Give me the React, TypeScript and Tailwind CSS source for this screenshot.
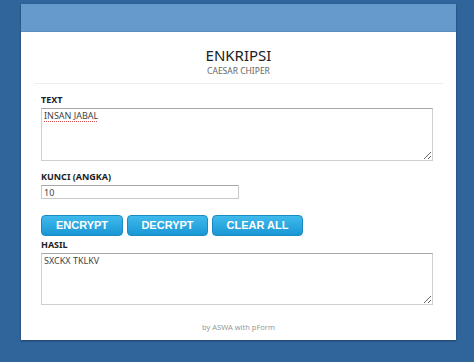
import { useState } from 'react';

const font = "font-['Noto_Sans',Tahoma,sans-serif]";

function shift(text: string, key: number) {
  return text
    .split('')
    .map((c) => {
      const code = c.charCodeAt(0);
      if (code >= 65 && code <= 90) return String.fromCharCode(((code - 65 + key + 26 * 10) % 26) + 65);
      if (code >= 97 && code <= 122) return String.fromCharCode(((code - 97 + key + 26 * 10) % 26) + 97);
      return c;
    })
    .join('');
}

export default function App() {
  const [text, setText] = useState('INSAN JABAL');
  const [kunci, setKunci] = useState('10');
  const [hasil, setHasil] = useState('SXCKX TKLKV');

  const btn =
    "h-[21px] rounded-[4px] border border-[#1b8ac2] bg-gradient-to-b from-[#3fbaec] to-[#1897d5] text-white font-bold text-[11px] font-['Liberation_Sans',Arial,sans-serif] leading-none";

  return (
    <div className={`w-[474px] h-[362px] bg-[#2f659b] pt-[4px] ${font}`}>
      <div className="ml-[21px] w-[435px] h-[336px] bg-white flex flex-col shadow-[0_1px_2px_rgba(0,0,0,0.35)]">
        {/* header band */}
        <div className="h-[28px] bg-[#6699cc] border-b border-[#5b8cc0]"></div>

        <div className="flex flex-col items-center mt-[13px]">
          <h1 className="text-[15px] leading-[20px] text-[#222]">ENKRIPSI</h1>
          <p className="text-[8.5px] leading-[12px] text-[#666]">CAESAR CHIPER</p>
        </div>
        <div className="mx-[13px] mt-[6px] border-t border-[#eeeeee]"></div>

        <div className="px-[20px] pt-[10px] flex flex-col">
          <label className="text-[9px] leading-[12px] font-bold text-[#222]">TEXT</label>
          <textarea
            value={text}
            onChange={(e) => setText(e.target.value)}
            spellCheck={false}
            className="mt-[2px] w-[392px] h-[53px] border border-[#d0d0d0] border-t-[#a8a8a8] px-[2px] py-[1px] text-[9px] leading-[12px] text-[#444] underline decoration-dotted decoration-[#e05050] decoration-[1px] underline-offset-[2px] resize-y outline-none"
          />

          <label className="mt-[10px] text-[9px] leading-[12px] font-bold text-[#222]">KUNCI (ANGKA)</label>
          <input
            value={kunci}
            onChange={(e) => setKunci(e.target.value)}
            className="mt-[2px] w-[198px] h-[14px] border border-[#c8c8c8] border-t-[#a8a8a8] px-[2px] text-[9px] leading-[12px] text-[#444] outline-none"
          />

          <div className="mt-[16px] flex gap-[4px]">
            <button className={`${btn} w-[82px]`} onClick={() => setHasil(shift(text, parseInt(kunci) || 0))}>
              ENCRYPT
            </button>
            <button className={`${btn} w-[81px]`} onClick={() => setHasil(shift(text, -(parseInt(kunci) || 0)))}>
              DECRYPT
            </button>
            <button
              className={`${btn} w-[91px]`}
              onClick={() => {
                setText('');
                setKunci('');
                setHasil('');
              }}
            >
              CLEAR ALL
            </button>
          </div>

          <label className="mt-[3px] text-[9px] leading-[12px] font-bold text-[#222]">HASIL</label>
          <textarea
            value={hasil}
            readOnly
            className="mt-[2px] w-[392px] h-[52px] border border-[#d0d0d0] border-t-[#a8a8a8] px-[2px] py-[1px] text-[9px] leading-[12px] text-[#444] resize-y outline-none"
          />
        </div>

        <p className="mt-auto mb-[7px] text-center text-[7.5px] leading-[12px] text-[#999]">by ASWA with pForm</p>
      </div>
    </div>
  );
}
